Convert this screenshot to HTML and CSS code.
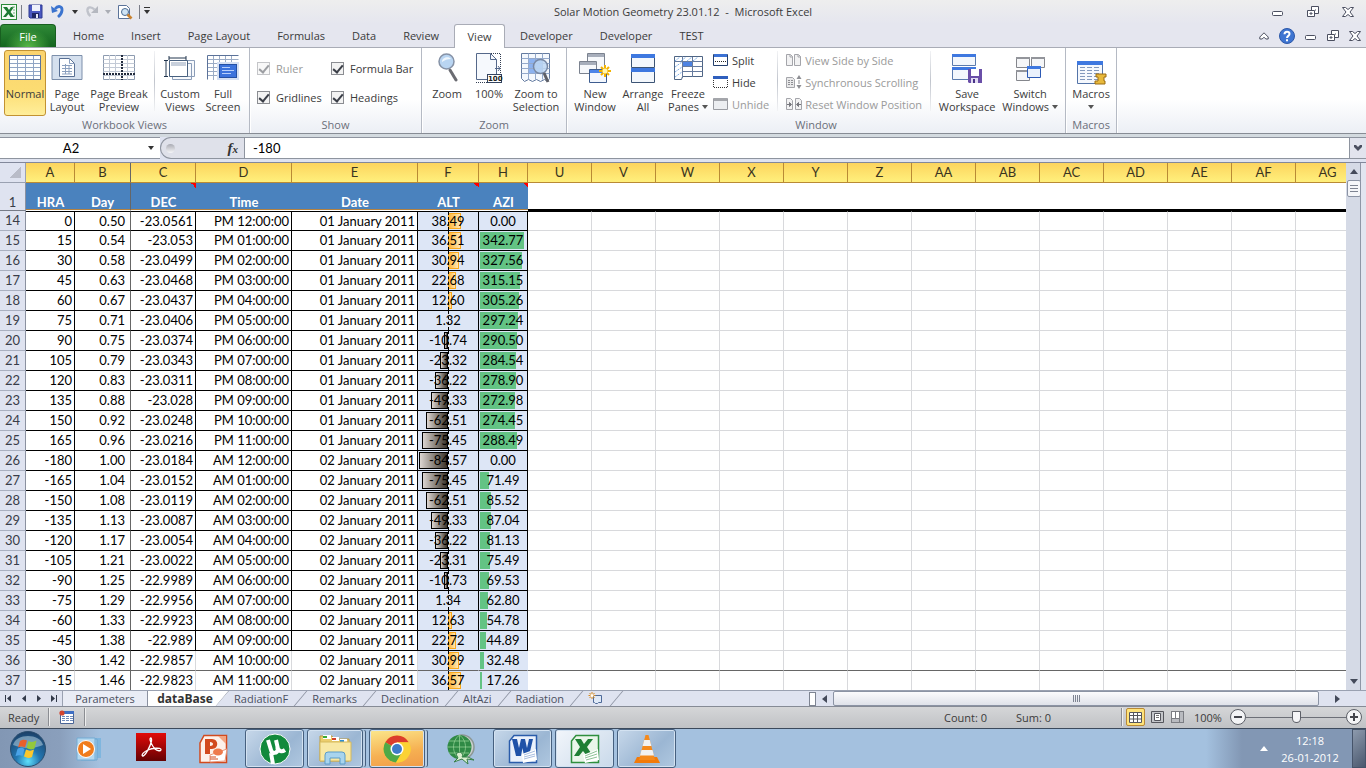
FILE: index.html
```
<!DOCTYPE html>
<html lang="en">
<head>
    <meta charset="UTF-8">
    <meta name="viewport" content="width=device-width, initial-scale=1.0">
    <title>Solar Motion Geometry 23.01.12 - Microsoft Excel</title>
    <link rel="stylesheet" href="styles.css">
</head>
<body>
    <header class="titlebar">
        <div class="quick">
            <svg width="16" height="16" viewBox="0 0 16 16"><rect x=".5" y=".5" width="15" height="15" fill="#f4faf4" stroke="#2b8a3a"/><path d="M2 3h4l2 3 2-3h3L9.500 8l4 5h-4L7.500 10 5 13H2l4-5z" fill="#1d7a33"/><path d="M11 3h3M12 6h2M12 9h2M13 12h1" stroke="#6fb07c"/></svg>
            <span class="quick-sep"></span>
            <button aria-label="Save"><svg width="15" height="15" viewBox="0 0 15 15"><path d="M1 1h13v13H2l-1-1z" fill="#4a58c0" stroke="#2f3b92"/><rect x="4" y="1" width="8" height="6" fill="#eef1fb"/><rect x="4" y="9" width="7" height="5" fill="#1f2766"/><rect x="8" y="10" width="2" height="4" fill="#e6e9f8"/></svg></button>
            <button aria-label="Undo"><svg width="15" height="15" viewBox="0 0 15 15"><path d="M4 5C7 1 11.500 2 11 6.500c-.3 2.500-1.500 4.500-4 6.500" fill="none" stroke="#3b74cf" stroke-width="2.800"/><path d="M0 2l1 7 6-2z" fill="#3b74cf"/></svg></button>
            <i class="caret"></i>
            <button aria-label="Redo"><svg width="15" height="15" viewBox="0 0 15 15"><path d="M10.500 5.500C7 2 3 3 3.500 7c.3 2 1.500 4 3 5" fill="none" stroke="#c0c3cb" stroke-width="2.400"/><path d="M14 2v7H7z" fill="#b5b8c0"/></svg></button>
            <i class="caret pale"></i>
            <button aria-label="Print Preview"><svg width="16" height="16" viewBox="0 0 16 16"><path d="M1.500 1.500h8l3 3v10h-11z" fill="#fff" stroke="#5b7399"/><circle cx="8" cy="8" r="3.500" fill="#cfe4f5" stroke="#4b6b92"/><path d="M10.500 10.500l4 4" stroke="#c9822e" stroke-width="2.600"/></svg></button>
            <span class="quick-sep"></span>
            <i class="caret lined"></i>
        </div>
        <h1 class="title">Solar Motion Geometry 23.01.12&nbsp; -&nbsp; Microsoft Excel</h1>
        <div class="window-buttons">
            <button aria-label="Minimize"><svg width="12" height="12" viewBox="0 0 12 12"><rect x=".5" y="5.500" width="10" height="4" rx="1" fill="#fff" stroke="#4b4f60"/></svg></button>
            <button aria-label="Restore"><svg width="12" height="12" viewBox="0 0 12 12" fill="#fff" stroke="#4b4f60"><path d="M4.500.5h7v7h-7z"/><path d="M.5 4.500h7v6h-7z"/><path d="M3 7h2v1H3zM8 4h1"/></svg></button>
            <button aria-label="Close"><svg width="12" height="12" viewBox="0 0 12 12"><path d="M.5 1.500h3l2.500 2 2.500-2h3L8 6l3.500 4.500h-3L6 8.500l-2.500 2h-3L4 6z" fill="#fff" stroke="#4b4f60"/></svg></button>
        </div>
    </header>

    <nav class="tabs">
        <button class="tab file">File</button>
        <button class="tab">Home</button>
        <button class="tab">Insert</button>
        <button class="tab">Page Layout</button>
        <button class="tab">Formulas</button>
        <button class="tab">Data</button>
        <button class="tab">Review</button>
        <button class="tab current">View</button>
        <button class="tab">Developer</button>
        <button class="tab">Developer</button>
        <button class="tab">TEST</button>
        <div class="tab-tools">
            <button aria-label="Collapse ribbon"><svg width="10" height="8" viewBox="0 0 10 8"><path d="M5 .8L9.200 5v2H6.800L5 5.200 3.200 7H.8V5z" fill="#fff" stroke="#4b4f60"/></svg></button>
            <button aria-label="Help"><svg width="16" height="16" viewBox="0 0 16 16"><circle cx="8" cy="8" r="7.500" fill="#3f75d1" stroke="#2d58a8"/><path d="M5.500 6.200C5.500 2.800 10.500 3 10.500 6c0 1.800-2.500 2-2.500 4M8 11.200v2" fill="none" stroke="#fff" stroke-width="2"/></svg></button>
            <button aria-label="Minimize window"><svg width="12" height="12" viewBox="0 0 12 12"><rect x=".5" y="5.500" width="10" height="4" rx="1" fill="#fff" stroke="#4b4f60"/></svg></button>
            <button aria-label="Restore window"><svg width="12" height="12" viewBox="0 0 12 12" fill="#fff" stroke="#4b4f60"><path d="M4.500.5h7v7h-7z"/><path d="M.5 4.500h7v6h-7z"/><path d="M3 7h2v1H3zM8 4h1"/></svg></button>
            <button aria-label="Close window"><svg width="12" height="12" viewBox="0 0 12 12"><path d="M.5 1.500h3l2.500 2 2.500-2h3L8 6l3.500 4.500h-3L6 8.500l-2.500 2h-3L4 6z" fill="#fff" stroke="#4b4f60"/></svg></button>
        </div>
    </nav>

    <section class="ribbon">
        <div class="group">
            <div class="group-body">
                <button class="big selected w42"><svg width="32" height="29" viewBox="0 -1 32 29"><path d="M.5 1.500h31v24H.5z" fill="#fff"/><path d="M.5 5.500h31M.5 9.500h31M.5 13.500h31M.5 17.500h31M.5 21.500h31M8.500 1v25M16.500 1v25M24.500 1v25" stroke="#90a5c4"/><path d="M.5 1.500h31v24H.5z" fill="none" stroke="#5b7299"/></svg><span>Normal</span></button>
                <button class="big w42"><svg width="32" height="29" viewBox="0 -1 32 29"><path d="M1 1.500h30v24H1z" fill="#d5e0ee" stroke="#7c8fab"/><path d="M8.500 4.500h10l5 5v13h-15z" fill="#fff" stroke="#586f93"/><path d="M18.500 4.500v5h5M11 11.500h10M11 14.500h10M11 17.500h10M11 20h10M14.500 10v10M18 11v9" fill="none" stroke="#8ba0bf"/></svg><span>Page<br>Layout</span></button>
                <button class="big w62"><svg width="32" height="29" viewBox="0 -1 32 29"><path d="M.5 1.500h31v24H.5z" fill="#fff" stroke="#8d9bb0"/><path d="M.5 5.500h31M.5 9.500h31M.5 13.500h31M.5 17.500h31M.5 21.500h31M6.500 1v25M12.500 1v25M24.500 1v25" stroke="#c3cad6"/><path d="M0 20h32M19 1v25" stroke="#222b3d" stroke-width="2" stroke-dasharray="2 1"/></svg><span>Page Break<br>Preview</span></button>
                <span class="sep"></span>
                <button class="big w42"><svg width="32" height="29" viewBox="0 -1 32 29"><path d="M13.500 6.500h17v16h-17zM8.500 9.500h19v16h-19z" fill="#f7f9fc" stroke="#8b9db8"/><path d="M5.500 6.500h18v16h-18z" fill="#fff" stroke="#47607f"/><path d="M7 8h15v4H7z" fill="#c8d0dc"/><path d="M5 4h17M2 7v15M5 2v4M22 2v4M0 6.500h4M0 22.500h4" stroke="#22364f"/></svg><span>Custom<br>Views</span></button>
                <button class="big w44"><svg width="32" height="29" viewBox="0 -1 32 29"><path d="M.5 1.500h31v24H.5z" fill="#fff"/><path d="M.5 5.500h31M.5 9.500h31M.5 13.500h31M.5 17.500h31M.5 21.500h31M6.500 1v25M12.500 1v25M18.500 1v25M24.500 1v25" stroke="#9bacc6"/><path d="M.5 25.500v-24h31" fill="none" stroke="#5b7299"/><rect x="10" y="8" width="22" height="18" fill="#d5e0f3"/><rect x="12.500" y="10.500" width="17" height="13" fill="#3c73dc" stroke="#2450a3"/><path d="M15 13.500h8M15 16.500h12M15 19.500h9" stroke="#b8d0fb"/></svg><span>Full<br>Screen</span></button>
            </div>
            <div class="group-name">Workbook Views</div>
        </div>

        <div class="group">
            <div class="group-body checks">
                <label class="off"><input type="checkbox" checked disabled>Ruler</label>
                <label><input type="checkbox" checked>Formula Bar</label>
                <label><input type="checkbox" checked>Gridlines</label>
                <label><input type="checkbox" checked>Headings</label>
            </div>
            <div class="group-name">Show</div>
        </div>

        <div class="group">
            <div class="group-body">
                <button class="big w42"><svg width="32" height="32" viewBox="0 0 32 32"><path d="M19 17l6 10" stroke="#6b6c72" stroke-width="3" stroke-linecap="round"/><circle cx="15.500" cy="8.500" r="7.500" fill="#b9d5f2" stroke="#8692a6" stroke-width="1.500"/><path d="M11 9c0-5 7-6 9-3-4 0-6 1-9 3z" fill="#eef6fd"/></svg><span>Zoom</span></button>
                <button class="big w42"><svg width="32" height="32" viewBox="0 0 32 32"><path d="M14 .5h13.500v29H3" fill="none" stroke="#333e52" stroke-dasharray="1 1"/><path d="M3.500.5h14l6 6v20h-20z" fill="#f6f9fd" stroke="#55688a"/><path d="M17.500.5v6h6M22 15.500h5M25 13l2 2.500-2 2.500" fill="none" stroke="#55688a"/><rect x="14.500" y="21.500" width="14" height="8" fill="#fff" stroke="#33435f"/><text x="15" y="28" class="tiny">100</text></svg><span>100%</span></button>
                <button class="big w52"><svg width="32" height="32" viewBox="0 0 32 32"><path d="M1.500.5h28v25l-2 3-3-2-4 2-4-2-4 2-4-2-4 2-3-3z" fill="#f4f8fd" stroke="#647ba0"/><path d="M8 5h15v15H8z" fill="#8cb2ef"/><path d="M1.500 5.500h28M1.500 10.500h28M1.500 15.500h28M1.500 20.500h28M8.500.5v26M15.500.5v26M22.500.5v26" stroke="#94a9cb"/><circle cx="20.500" cy="13.500" r="7" fill="#bdd7f3" fill-opacity=".85" stroke="#7888a4" stroke-width="1.500"/><path d="M24 20l4 9" stroke="#5e6068" stroke-width="3"/></svg><span>Zoom to<br>Selection</span></button>
            </div>
            <div class="group-name">Zoom</div>
        </div>

        <div class="group">
            <div class="group-body">
                <button class="big w48"><svg width="32" height="32" viewBox="0 0 32 32"><path d="M8.500.5h17v20h-17z" fill="#f6f8fb" stroke="#7b828f"/><path d="M9 1h16v3H9z" fill="#a7aebb"/><path d="M.5 8.500h17v12H.5z" fill="#f6f8fb" stroke="#7b828f"/><path d="M1 9h16v3H1z" fill="#a7aebb"/><path d="M10.500 16.500h17v13h-17z" fill="#f3f7fd" stroke="#3d5c8f"/><path d="M11 17h16v3H11z" fill="#4d85e8"/><path d="M26 12v12M20 18h12M22 14l8 8M30 14l-8 8" stroke="#f2b200" stroke-width="2"/><circle cx="26" cy="18" r="2.500" fill="#fff6b0"/></svg><span>New<br>Window</span></button>
                <button class="big w48"><svg width="32" height="32" viewBox="0 0 32 32"><path d="M4.500 1.500h23v13h-23zM4.500 15.500h23v14h-23z" fill="#f3f7fc" stroke="#3c5475"/><path d="M4 1h24v4H4zM4 15h24v4H4z" fill="#3e78e0"/></svg><span>Arrange<br>All</span></button>
                <button class="big w42"><svg width="32" height="32" viewBox="0 0 32 32"><path d="M2.500 3.500h28v20h-20l-1 3h-7z" fill="#fff" stroke="#4f6584"/><path d="M2.500 8.500h28M10.500 3v22M10.500 13.500h20M10.500 18.500h20M20.500 4v20" stroke="#667b9e"/><path d="M11 9h9v4h-9z" fill="#4d83e3"/><path d="M3 8l5-4M9 8l5-4M15 8l5-4M21 8l5-4M3 14l7-5M3 19l7-5M3 24l7-5" stroke="#7fb0e8" stroke-dasharray="2 1"/></svg><span>Freeze<br>Panes <i class="caret"></i></span></button>
                <div class="small-list">
                    <button><svg width="16" height="14" viewBox="0 0 16 14"><path d="M.5 1.500h14v11H.5z" fill="#fff" stroke="#25406d"/><path d="M1 1h13v3H1z" fill="#3c72d4"/><path d="M2 8.500h12" stroke="#222" stroke-dasharray="1 1"/></svg>Split</button>
                    <button><svg width="16" height="14" viewBox="0 0 16 14"><path d="M.5 3v9.500h14V3" fill="#fff" stroke="#333" stroke-dasharray="1 1"/><path d="M0 1h15v3H0z" fill="#2f5fbd"/></svg>Hide</button>
                    <button disabled><svg width="16" height="14" viewBox="0 0 16 14"><path d="M.5 1.500h14v11H.5z" fill="#eceef1" stroke="#9a9ca2"/><path d="M1 1h13v3H1z" fill="#a4a6ab"/></svg>Unhide</button>
                </div>
                <span class="sep"></span>
                <div class="small-list">
                    <button disabled><svg width="16" height="14" viewBox="0 0 16 14"><path d="M.5 1.500h4l2 2v9h-6zM8.500 1.500h4l2 2v9h-6z" fill="#f2f2f3" stroke="#a4a5aa"/><path d="M4 2v2h3M12 2v2h3" fill="none" stroke="#a4a5aa"/></svg>View Side by Side</button>
                    <button disabled><svg width="16" height="14" viewBox="0 0 16 14"><path d="M.5 2.500h6l2 2v8h-8z" fill="#e9e9ea" stroke="#a4a5aa"/><path d="M2 5.500h2M5 5.500h2M2 7.500h2M5 7.500h2M2 9.500h2M5 9.500h2" stroke="#8d8e93"/><path d="M13 0l2.500 4h-5zM13 14l2.500-4h-5z" fill="#8d8e93"/><path d="M13 5v4" stroke="#8d8e93"/></svg>Synchronous Scrolling</button>
                    <button disabled><svg width="16" height="14" viewBox="0 0 16 14"><path d="M.5 1.500h4l2 2v9h-6zM9.500 1.500h4l2 2v9h-6z" fill="#f2f2f3" stroke="#a4a5aa"/><path d="M1 7.500h4M11 7.500h4M3.500 5.500l2 2-2 2zM12.500 5.500l-2 2 2 2z" fill="#76777d" stroke="#76777d"/></svg>Reset Window Position</button>
                </div>
                <span class="sep"></span>
                <button class="big w64"><svg width="32" height="32" viewBox="0 0 32 32"><path d="M1.500 1.500h23v11h-23zM1.500 14.500h23v12h-23z" fill="#f3f7fc" stroke="#5b7bad"/><path d="M1 1h24v3H1zM1 14h24v3H1z" fill="#3e78e0"/><path d="M17 16h14v14H18l-1-1z" fill="#6a4fa8"/><path d="M20 16h8v7h-8z" fill="#fff"/><path d="M20 25h7v5h-7z" fill="#e2dcf2"/><path d="M22 26h2v4h-2z" fill="#493387"/></svg><span>Save<br>Workspace</span></button>
                <button class="big w62"><svg width="32" height="32" viewBox="0 0 32 32"><path d="M2.500 4.500h13v10h-13zM17.500 4.500h13v10h-13zM2.500 17.500h13v10h-13z" fill="#f5f6f8" stroke="#84868c"/><path d="M2 4h14v2H2zM17 4h14v2H17zM2 17h14v2H2z" fill="#93959b"/><path d="M13.500 13.500h13v11h-13z" fill="#eaf1fc" stroke="#2c5ab4"/><path d="M13 13h14v3H13z" fill="#3e78e0"/></svg><span>Switch<br>Windows <i class="caret"></i></span></button>
            </div>
            <div class="group-name">Window</div>
        </div>

        <div class="group">
            <div class="group-body">
                <button class="big w42"><svg width="32" height="32" viewBox="0 0 32 32"><path d="M2.500 8.500h25v22h-25z" fill="#f5f8fd" stroke="#5474a8"/><path d="M2 8h26v4H2z" fill="#3e78e0"/><path d="M5 14.500h20M5 17.500h20M5 20.500h20M5 23.500h20M5 26.500h20" stroke="#8298bd" stroke-dasharray="5 2"/><path d="M21 21h10v3h-2v4h1v3H20v-3h3v-4h-2z" fill="#e8b93c" stroke="#9b6d13"/></svg><span>Macros<br><i class="caret"></i></span></button>
            </div>
            <div class="group-name">Macros</div>
        </div>
    </section>

    <section class="formula-bar">
        <div class="name-box"><input type="text" value="A2" aria-label="Name Box"><i class="caret"></i></div>
        <div class="fx-area"><span class="knob"></span><button class="fx" aria-label="Insert Function"><i>f</i><small>x</small></button></div>
        <input class="formula" type="text" value="-180" aria-label="Formula">
        <button class="expand" aria-label="Expand Formula Bar"><svg width="8" height="6" viewBox="0 0 8 6"><path d="M0 0h2l2 2 2-2h2v2L4 6 0 2z" fill="#4b4f60"/></svg></button>
    </section>

    <main class="workspace">
        <div class="sheet">
            <table class="grid" id="grid">
                <colgroup><col class="c-row"><col class="c-a"><col class="c-b"><col class="c-c"><col class="c-d"><col class="c-e"><col class="c-f"><col class="c-h"></colgroup>
                <thead></thead>
                <tbody></tbody>
            </table>
        </div>
        <div class="vscroll">
            <button aria-label="Scroll up"><i class="tri up"></i></button>
            <span class="thumb"></span>
            <button class="last" aria-label="Scroll down"><i class="tri down"></i></button>
        </div>
    </main>

    <section class="sheet-bar">
        <div class="sheet-nav">
            <button aria-label="First sheet"><svg width="8" height="7" viewBox="0 0 8 7"><path d="M0 0h1v7H0zM6 0v7L2 3.500z" fill="#333a4a"/></svg></button>
            <button aria-label="Previous sheet"><svg width="8" height="7" viewBox="0 0 8 7"><path d="M6 0v7L2 3.500z" fill="#333a4a"/></svg></button>
            <button aria-label="Next sheet"><svg width="8" height="7" viewBox="0 0 8 7"><path d="M2 0v7l4-3.500z" fill="#333a4a"/></svg></button>
            <button aria-label="Last sheet"><svg width="8" height="7" viewBox="0 0 8 7"><path d="M6 0h1v7H6zM1 0v7l4-3.500z" fill="#333a4a"/></svg></button>
        </div>
        <div class="sheet-tabs">
            <button class="first">Parameters</button>
            <button class="active">dataBase</button>
            <button>RadiationF</button>
            <button>Remarks</button>
            <button>Declination</button>
            <button>AltAzi</button>
            <button>Radiation</button>
            <button class="new" aria-label="Insert Worksheet"><svg width="16" height="13" viewBox="0 0 16 13"><path d="M5.500 3.500h8v7h-3l-1 1h-2l-1-1h-1z" fill="#dfe9f7" stroke="#4e6a99"/><path d="M4 0v7M.5 3.500h7M1.500 1l5 5M6.500 1l-5 5" stroke="#d98a1c"/><circle cx="4" cy="3.500" r="1.500" fill="#fff"/></svg></button>
        </div>
        <div class="hscroll">
            <span class="splitter"></span>
            <button aria-label="Scroll left"><i class="tri left"></i></button>
            <div class="track"><span class="thumb"></span></div>
            <button aria-label="Scroll right"><i class="tri right"></i></button>
        </div>
    </section>

    <footer class="status">
        <span class="ready">Ready</span>
        <span class="status-sep"></span>
        <svg class="record" width="16" height="14" viewBox="0 0 16 14"><path d="M1.500 1.500h13v12h-13z" fill="#fff" stroke="#4a6596"/><path d="M2 1h13v3H2z" fill="#3e6fc4"/><path d="M3 6.500h11M3 8.500h11M3 10.500h11" stroke="#6d8abb" stroke-dasharray="3 1"/><circle cx="3" cy="3" r="2.600" fill="#d2452f"/></svg>
        <span class="status-sep"></span>
        <span class="count">Count: 0</span>
        <span class="sum">Sum: 0</span>
        <span class="status-sep"></span>
        <div class="views">
            <button class="on" aria-label="Normal view"><svg width="13" height="11" viewBox="0 0 13 11"><path d="M.5.5h12v10H.5zM.5 3.500h12M.5 7h12M4.500.5v10M8.500.5v10" fill="#fff" stroke="#55565c"/></svg></button>
            <button aria-label="Page layout view"><svg width="13" height="12" viewBox="0 0 13 12"><path d="M.5.5h12v11H.5z" fill="#c4c6ca" stroke="#55565c"/><path d="M3.500 2.500h6v7h-6z" fill="#fff" stroke="#55565c"/><path d="M5 4.500h3M5 6.500h3" stroke="#777"/></svg></button>
            <button aria-label="Page break view"><svg width="13" height="12" viewBox="0 0 13 12"><path d="M0 0h13v12H0z" fill="#7b7d83"/><path d="M1 1h3v6H1zM5 1h3v6H5zM9 1h3v10H9z" fill="#fff"/><path d="M1 8h7v3H1zM9 1h3v10H9z" fill="#b9bbc0"/></svg></button>
        </div>
        <span class="percent">100%</span>
        <button aria-label="Zoom out"><svg width="16" height="16" viewBox="0 0 16 16"><circle cx="8" cy="8" r="7.500" fill="#f3f4f6" stroke="#5c5f67"/><path d="M4 8h8" stroke="#44464d" stroke-width="2"/></svg></button>
        <input class="zoom-slider" type="range" min="0" max="100" value="50" aria-label="Zoom">
        <button aria-label="Zoom in"><svg width="16" height="16" viewBox="0 0 16 16"><circle cx="8" cy="8" r="7.500" fill="#f3f4f6" stroke="#5c5f67"/><path d="M4 8h8M8 4v8" stroke="#44464d" stroke-width="2"/></svg></button>
    </footer>

    <footer class="taskbar">
        <button class="slot start" aria-label="Start"><svg width="38" height="38" viewBox="0 0 38 38"><defs><radialGradient id="orb" cx=".5" cy=".85" r=".85"><stop offset="0" stop-color="#5fe0fb"/><stop offset=".4" stop-color="#2277b2"/><stop offset="1" stop-color="#1c3f66"/></radialGradient></defs><circle cx="19" cy="19" r="17.500" fill="url(#orb)" stroke="#294d6e"/><path d="M4 15C7 3 31 3 34 15c-9 4-20 4-30 0z" fill="#b6cfdf" opacity=".55"/><path d="M11 11c3-2 5-1.500 7-.5l-2 7c-2-1.500-5-1.500-7 0z" fill="#e8602c"/><path d="M19.500 11c3 1.500 5 1 8-.5l-2 8c-3 1.500-5 1-8-.5z" fill="#94c83c"/><path d="M8.500 19c3-2 5-1 7 0l-2 7c-2-1-4-1-7 0z" fill="#4aa3e8"/><path d="M17 19.500c3 1.500 5 1.500 8 0l-2 7.500c-3 1.500-5 1-8-.5z" fill="#fbc72c"/></svg></button>
        <button class="slot" aria-label="Windows Media Player"><svg width="28" height="26" viewBox="0 0 28 26"><path d="M10 2h16v20H10z" fill="#7fb6de"/><path d="M6 3h16v21H6z" fill="#9dcaea" stroke="#6fa6cf"/><path d="M2 2h18v22H2z" fill="#b5d8ef" stroke="#72abd4"/><circle cx="11" cy="13" r="8.500" fill="#f07c1c" stroke="#fff"/><path d="M8 8l8 5-8 5z" fill="#fff"/></svg></button>
        <button class="slot adobe" aria-label="Adobe Reader"><svg width="30" height="28" viewBox="0 0 30 28"><defs><linearGradient id="pdf" x2="0" y2="1"><stop offset="0" stop-color="#e20a08"/><stop offset="1" stop-color="#640203"/></linearGradient></defs><path d="M0 0h30v28H0z" fill="url(#pdf)"/><path d="M14.500 5c-1.500 1 1 7 4.500 11 2 2 6 2.500 6 .5s-9-1.500-13 .5c-4 1.500-7 5-5.500 6 2.500.5 8-10 9-15 .3-2-.3-3.300-1-3z" fill="none" stroke="#fff" stroke-width="1.300"/></svg></button>
        <button class="slot" aria-label="PowerPoint"><svg width="30" height="30" viewBox="0 0 30 30"><path d="M6 1.500h22.500v27H2V9z" fill="#fdf1ea" stroke="#d24a1e" stroke-width="1.500"/><path d="M20 2h8v8z" fill="#f2a582"/><path d="M7 5h7c7 0 7 10 0 10h-2v5H7zM12 8v4c4 0 4-4 0-4z" fill="#d24a1e" fill-rule="evenodd"/><path d="M12 21l17-6-2 12-15 1z" fill="#fff" stroke="#e9967a"/><ellipse cx="20" cy="18" rx="5" ry="3.500" fill="#ee7a4c"/><path d="M12 23h6M12 25h8" stroke="#d24a1e"/></svg></button>
        <button class="slot tile" aria-label="uTorrent"><svg width="32" height="32" viewBox="0 0 32 32"><circle cx="16" cy="16" r="15" fill="#128a3c" stroke="#fff"/><path d="M9 7l3 10c1 4 6 4 7-1l-2-9M18 14c2 5 5 5 8 3M12 20l2 11" fill="none" stroke="#fff" stroke-width="4"/></svg></button>
        <button class="slot tile stack" aria-label="Explorer"><svg width="34" height="32" viewBox="0 0 34 32"><path d="M2 3h12l2 3h15v22H2z" fill="#eccd6c" stroke="#b99a46"/><path d="M5 2h8v4H5zM14 4h7v4h-7zM22 6h7v4h-7z" fill="#fff"/><path d="M5 3h4v2H5z" fill="#39a936"/><path d="M14 5h4v2h-4z" fill="#d2402c"/><path d="M22 7h4v2h-4z" fill="#2b8ed6"/><path d="M2 9h31v19H2z" fill="#f8e8a4" stroke="#d5b95c"/><path d="M7 31V22q0-3 3-3h14q3 0 3 3v9h-5v-6H12v6z" fill="#a8d4ee" stroke="#5a9cc9"/></svg></button>
        <button class="slot tile stack hot" aria-label="Chrome"><svg width="28" height="28" viewBox="0 0 28 28"><circle cx="14" cy="14" r="13.500" fill="#fbd234"/><path d="M14 14L2.300 7.250A13.500 13.500 0 0 1 25.700 7.250H14z" fill="#dc3d2c"/><path d="M14 14L2.300 7.250A13.500 13.500 0 0 0 13 27.400L19 17z" fill="#4fa947"/><path d="M14 7.500h11.900a13.500 13.500 0 0 1-12.900 20L20 17z" fill="#fbd234"/><circle cx="14" cy="14" r="6.500" fill="#fff"/><circle cx="14" cy="14" r="5" fill="#3e7cc9"/></svg></button>
        <button class="slot" aria-label="Globe"><svg width="30" height="32" viewBox="0 0 30 32"><circle cx="16" cy="14" r="12" fill="#c9cfcd" stroke="#8b9694" stroke-width="1.500"/><circle cx="13.500" cy="14" r="12" fill="#2f8a45"/><path d="M13.500 2v24M1.500 14h24M3 8h20M3 20h20M13.500 2c-8 6-8 18 0 24M13.500 2c8 6 8 18 0 24" fill="none" stroke="#8fce92" stroke-width=".8"/><path d="M10 21c4-4 8 0 6 3h6l6 3-7-1 1 5-6-5-8 3 4-4z" fill="#d9efcf" stroke="#37804a"/></svg></button>
        <button class="slot tile" aria-label="Word"><svg width="30" height="30" viewBox="0 0 30 30"><path d="M6 1.500h22.500v27H1.500V7z" fill="#eaf1fb" stroke="#2a5caa" stroke-width="1.500"/><path d="M4 5h5l2 9 2-9h4l2 9 2-9h4l-4 17h-5l-1.500-8L13 22H8z" fill="#1f52a8"/><path d="M14 20l14-5 1 11-14 3z" fill="#fff"/><path d="M16 21l11-4M16 23l11-3M16 25l11-3" stroke="#a7bde0"/></svg></button>
        <button class="slot tile lit" aria-label="Excel"><svg width="30" height="30" viewBox="0 0 30 30"><path d="M6 1.500h22.500v27H1.500V7z" fill="#eaf6ea" stroke="#2f8f3e" stroke-width="1.500"/><path d="M5 5h6l3 5 4-5h5l-6 8 6 9h-6l-4-5-4 5H4l6-9z" fill="#1e7f34"/><path d="M13 21l15-6 1 11-14 3z" fill="#fff"/><path d="M15 22l12-5M15 24l12-4M16 26l11-3" stroke="#8cc296"/></svg></button>
        <button class="slot tile" aria-label="VLC"><svg width="28" height="30" viewBox="0 0 28 30"><path d="M4 23h20l3 6H1z" fill="#f27a0a"/><path d="M12.500 1h3L22 26H6z" fill="#f58a1c"/><path d="M11.200 6h5.600l1.600 6H9.600zM8.500 16h11l1.500 5.500H7z" fill="#f2f2f2"/></svg></button>
        <div class="tray">
            <i class="tri tray-up"></i>
            <div class="clock">12:18<br>26-01-2012</div>
            <button class="show-desktop" aria-label="Show desktop"></button>
        </div>
    </footer>

    <script src="script.js"></script>
</body>
</html>
```

FILE: styles.css
```
* { box-sizing: border-box; }
body { margin: 0; height: 100vh; display: flex; flex-direction: column; overflow: hidden; font-family: "Open Sans", sans-serif; font-size: 11px; color: #3b3b3b; background: #dfe3f0; }
button { font: inherit; color: inherit; background: none; border: none; padding: 0; margin: 0; cursor: pointer; }
svg { display: block; flex: none; }

.caret { display: inline-block; flex: none; border: 3px solid transparent; border-top: 4px solid #333; border-bottom: 0; }
.caret.pale { border-top-color: #aaadb5; }
.caret.lined { position: relative; }
.caret.lined::before { content: ""; position: absolute; left: -3px; top: -7px; width: 6px; height: 1px; background: #333; }
.tri { display: block; border: 4px solid transparent; }
.tri.up { border-top: 0; border-bottom: 5px solid #444a5a; }
.tri.down { border-bottom: 0; border-top: 5px solid #444a5a; }
.tri.left { border-left: 0; border-right: 5px solid #444a5a; }
.tri.right { border-right: 0; border-left: 5px solid #444a5a; }

/* title */
.titlebar { flex: none; height: 24px; padding-bottom: 1px; display: grid; grid-template-columns: 1fr auto 1fr; align-items: center; background: linear-gradient(#eeeeee, #e5e6ef); }
.quick { display: flex; align-items: center; gap: 4px; padding-left: 1px; }
.quick button { margin: 0 2px; }
.quick-sep { width: 1px; height: 14px; background: #7b7e88; }
.title { margin: 0; font-size: 11px; font-weight: 400; }
.window-buttons { display: flex; justify-content: flex-end; gap: 23px; padding-right: 12px; }

/* ribbon tabs */
.tabs { flex: none; display: flex; height: 24px; background: #e5e6ef; border-bottom: 1px solid #a9acb6; }
.tab { padding: 0 14px 0 13px; height: 23px; font-size: 11px; }
.tab.file { width: 56px; margin-right: 4px; padding: 0; color: #fff; background: radial-gradient(ellipse at bottom, #57b847, transparent 60%), linear-gradient(#2f8a37, #14651f); border: 1px solid #185f20; border-bottom: 0; border-radius: 4px 4px 0 0; }
.tab.current { height: 24px; width: 51px; margin: 0 2px 0 1px; padding: 0; background: #fff; border: 1px solid #a9acb6; border-bottom: 0; border-radius: 3px 3px 0 0; }
.tab-tools { display: flex; align-items: center; gap: 10px; margin-left: auto; padding-right: 5px; }

/* ribbon */
.ribbon { flex: none; display: flex; height: 86px; background: linear-gradient(#fff 60%, #eceff5); border-bottom: 1px solid #878c94; }
.group { display: flex; flex-direction: column; padding: 1px 4px 0; border-right: 1px solid #b5bac4; box-shadow: 1px 0 #fff; }
.group-body { display: flex; flex: 1; }
.group-name { height: 16px; line-height: 15px; text-align: center; color: #6b6f7a; }
.big { display: flex; flex-direction: column; align-items: center; height: 66px; margin-top: 1px; padding: 2px 0; line-height: 13px; white-space: nowrap; text-align: center; border: 1px solid transparent; border-radius: 3px; }
.big span { height: 26px; margin-top: auto; }
.big.selected { background: linear-gradient(#fbd36e, #fcdc72 60%, #ffee9a); border-color: #c29233; }
.big .caret { vertical-align: 2px; border-top-color: #555; }
.w42 { width: 42px; }
.w44 { width: 44px; }
.w48 { width: 48px; }
.w52 { width: 52px; }
.w62 { width: 62px; }
.w64 { width: 64px; }
.sep { width: 1px; height: 60px; margin: 2px 4px; background: linear-gradient(#f2f3f5, #c1c5cd, #f2f3f5); }
.tiny { font: bold 7px "DejaVu Sans", sans-serif; fill: #222; }
.checks { display: grid; grid-template-columns: 74px 86px; grid-template-rows: 29px 29px; padding: 5px 0 0 3px; }
.checks label { display: flex; align-items: center; gap: 6px; white-space: nowrap; }
.checks input { appearance: none; width: 13px; height: 13px; margin: 0; border: 1px solid #8b8d92; background: #f3f3f3; display: grid; place-items: center; }
.checks input::before { content: ""; width: 4px; height: 8px; margin-top: -2px; border: solid #3b3f48; border-width: 0 2px 2px 0; transform: rotate(40deg); }
.checks .off { color: #9a9a9a; }
.checks .off input { opacity: .5; }
.small-list { display: flex; flex-direction: column; padding: 0 4px; }
.small-list button { display: flex; align-items: center; gap: 3px; height: 22px; white-space: nowrap; }
.small-list button:disabled { color: #9a9a9a; }

/* formula bar */
.formula-bar { flex: none; display: flex; height: 29px; padding: 3px 0 0; border-bottom: 1px solid #82889b; box-shadow: inset 0 3px #d3dadf; }
.formula-bar > * { height: 22px; border: solid #8e949f; border-width: 1px 0; }
.name-box { display: flex; align-items: center; width: 160px; padding-right: 6px; background: #fff; }
.name-box input { width: 100%; min-width: 0; padding: 0 6px 0 0; border: 0; background: none; text-align: center; font: 13px Lato, sans-serif; color: #000; }
.fx-area { display: flex; align-items: center; justify-content: space-between; width: 84px; padding: 0 6px 0 5px; background: #dfe1ea; }
.formula-bar .fx-area { border-left-width: 1px; border-radius: 11px 0 0 11px; }
.knob { width: 9px; height: 9px; border-radius: 50%; background: linear-gradient(#a9abb3, #f6f6f9); }
.fx { font: bold italic 15px/18px "Liberation Serif", serif; color: #333; }
.fx small { font-size: 11px; }
.formula { flex: 1; min-width: 0; padding: 0 8px; background: #fff; font: 13px Lato, sans-serif; color: #000; }
.formula-bar .formula { border-left-width: 1px; }
.expand { display: grid; place-items: center; width: 17px; background: #e2e4ee; }
.formula-bar .expand { border-left-width: 1px; }

/* sheet */
.workspace { flex: 1; min-height: 0; display: flex; }
.sheet { flex: 1; min-width: 0; overflow: hidden; background: #fff; }
.grid { table-layout: fixed; width: 1360px; border-collapse: separate; border-spacing: 0; font: 13px/16px Lato, sans-serif; color: #000; }
.c-row { width: 26px; }
.c-a { width: 49px; }
.c-b { width: 56px; }
.c-c { width: 65px; }
.c-d { width: 96px; }
.c-e { width: 126px; }
.c-f { width: 61px; }
.c-h { width: 49px; }
.c-x { width: 64px; }
.grid th, .grid td { height: 20px; padding: 0 2px 1px; white-space: nowrap; overflow: hidden; border: solid #d8d9dc; border-width: 0 1px 1px 0; text-align: right; font-weight: 400; }
.grid thead th { background: linear-gradient(#fcd45e, #fff07c); border-color: #b98a35; text-align: center; color: #3a3420; }
.grid thead th:first-child { background: linear-gradient(135deg, transparent 50%, #b9bcc8 50%) 10px 4px / 11px 11px no-repeat, #dfe3f0; border-color: #9aa1b1; }
.grid .row-no { background: #dfe3f0; border-color: #a9b0c0; border-right-color: #8b91a0; text-align: center; color: #3a3d48; }
.grid .titles th { height: 28px; vertical-align: bottom; border-color: #000; border-bottom-width: 2px; border-right: 0; padding-bottom: 0; }
.grid .titles .row-no { border-right: 1px solid #8b91a0; border-bottom: 1px solid #777c88; }
.grid .titles .name { position: relative; text-align: center; font-weight: 700; color: #fff; background: #4a82be; border-bottom: 1px solid #fff; box-shadow: inset 0 -1px #b4813f; }
.grid .titles .noted::after { content: ""; position: absolute; right: 0; top: 0; border: solid transparent; border-width: 0 0 5px 5px; border-right: 0 solid red; background: linear-gradient(45deg, transparent 50%, red 50%) border-box; }
.grid .first td { border-top: 1px solid #000; }
.grid .boxed .cell { border-color: #000; }
.grid .frozen td { border-bottom-color: #666; }
.grid .day, .grid .boxed .day, .grid .titles .day, .grid thead th:nth-child(3) { padding-right: 5px; border-right: 1px solid #666; }
.grid thead th:nth-child(3), .grid .titles .day { padding-right: 2px; }
.grid .alt, .grid .azi { position: relative; text-align: center; background: #dde6f6; }
.grid tr:not(.boxed) .alt, .grid tr:not(.boxed) .azi { border-right-color: #dde6f6; }
.alt span, .azi span { position: relative; }
.alt::after { content: ""; position: absolute; left: 50%; top: 0; bottom: 0; border-left: 1px dashed #000; }
.bar { position: absolute; top: 1px; bottom: 1px; }
.bar.plus { left: 50%; background: linear-gradient(90deg, #ffb83c, #ffe6b4); border: 1px solid #fba91c; }
.bar.minus { right: 50%; background: linear-gradient(90deg, #dcd6d2, #3a3228); border: 1px solid #000; }
.bar.green { left: 1px; background: #63c384; }

.vscroll { display: flex; flex-direction: column; align-items: center; width: 20px; padding-right: 5px; background: linear-gradient(90deg, #d5dae6 14px, #8f96a6 14px, #8f96a6 15px, #e2e5f0 15px); }
.vscroll button { display: grid; place-items: center; height: 17px; }
.vscroll .thumb { width: 14px; height: 17px; border: 1px solid #8b93a4; border-radius: 2px; background: repeating-linear-gradient(#7e8492 0 1px, transparent 1px 3px) center / 8px 7px no-repeat, #f5f6f9; }
.vscroll .last { margin-top: auto; }

/* sheet tabs */
.sheet-bar { flex: none; display: flex; height: 17px; border-top: 1px solid #9aa1b1; border-bottom: 1px solid #868b96; }
.sheet-nav { display: flex; align-items: center; gap: 7px; width: 63px; padding-left: 5px; border-right: 1px solid #9aa1b1; }
.sheet-tabs { display: flex; flex: 1; min-width: 0; color: #4b5060; }
.sheet-tabs button { position: relative; padding: 0 12px; line-height: 15px; white-space: nowrap; }
.sheet-tabs button:nth-child(n+2)::after { content: ""; position: absolute; right: -1px; top: 0; width: 1px; height: 15px; background: #8b91a0; transform: skewX(-40deg); }
.sheet-tabs .first { width: 85px; background: #e9ecf5; border-right: 1px solid #8b91a0; }
.sheet-tabs .active { width: 81px; margin-right: -7px; padding: 0 7px 0 0; background: #fff; font-size: 12px; font-weight: 700; color: #333; clip-path: polygon(0 0, 100% 0, calc(100% - 13px) 100%, 0 100%); }
.sheet-tabs button.active::after { right: 6px; }
.hscroll { display: flex; flex: 0 1 557px; align-items: center; }
.splitter { width: 7px; height: 14px; border: 1px solid #7e8492; background: #fff; }
.hscroll button { display: grid; place-items: center; width: 17px; }
.track { flex: 1; height: 15px; display: flex; }
.track .thumb { width: 98%; border: 1px solid #8b93a4; border-radius: 2px; background: repeating-linear-gradient(90deg, #7e8492 0 1px, transparent 1px 2px) center / 7px 7px no-repeat, linear-gradient(#fbfbfd, #dfe2ea); }
.hscroll button:last-child { margin-right: 20px; }

/* status */
.status { flex: none; display: flex; align-items: center; height: 21px; padding: 0 4px 1px 8px; background: linear-gradient(#d5d6d8, #c0c2c5); }
.status-sep { width: 2px; height: 18px; background: #8b8d92; border-right: 1px solid #eee; }
.ready { width: 40px; }
.record { margin: 0 9px; }
.count { margin-left: auto; width: 72px; }
.sum { width: 105px; }
.views { display: flex; align-items: center; gap: 5px; margin: 0 9px 0 3px; }
.views button { height: 18px; padding: 0 1px; }
.views .on { padding: 0 2px; border: 1px solid #b98a35; border-radius: 2px; background: #ffe37a; }
.percent { width: 36px; }
.zoom-slider { appearance: none; width: 100px; height: 16px; margin: 0; background: linear-gradient(#6c6f77, #6c6f77) center / 100% 1px no-repeat; }
.zoom-slider::-webkit-slider-thumb { appearance: none; width: 9px; height: 12px; border: 1px solid #5c5f67; border-radius: 1px 1px 5px 5px; background: #f6f6f8; }

/* taskbar */
.taskbar { flex: none; display: flex; height: 40px; border-top: 1px solid #3c4a5c; background: linear-gradient(90deg, #8297b4, #8a9fbc 60px, #a4c1df 100px); }
.slot { display: grid; place-items: center; width: 59px; margin-right: 3px; }
.slot.start { width: 56px; }
.slot.adobe { padding-bottom: 4px; }
.tile { border: 1px solid #46607f; border-radius: 3px; box-shadow: inset 0 0 0 1px #d3e2f1; background: linear-gradient(135deg, #c7d8ea, #9bb6d3 60%, #b0c8e0); }
.tile.stack { width: 56px; margin-right: 6px; box-shadow: inset 0 0 0 1px #d3e2f1, 3px 0 0 -1px #b8cde3, 4px 0 0 -1px #46607f; }
.tile.hot { background: linear-gradient(170deg, #fbe88c, #f6b052 60%, #f09a48); }
.tile.lit { background: linear-gradient(135deg, #f2f6fb, #c9d9ea); }
.tray { display: flex; align-items: center; justify-content: flex-end; width: 160px; margin-left: auto; background: linear-gradient(90deg, transparent, #8297b4 36px); color: #fff; }
.tray-up { border-top: 0; border-bottom: 5px solid #fff; }
.clock { width: 84px; text-align: center; line-height: 17px; }
.show-desktop { align-self: stretch; width: 14px; border: 1px solid #46546a; background: linear-gradient(135deg, #8d9aad, #4a586e); }
```

FILE: script.js
```
const extraColumns = ["U", "V", "W", "X", "Y", "Z", "AA", "AB", "AC", "AD", "AE", "AF", "AG"];
const firstRow = 14;

// declination, altitude, azimuth for each hour
const hours = [
    ["-23.0561", 38.49, 0], ["-23.053", 36.51, 342.77], ["-23.0499", 30.94, 327.56],
    ["-23.0468", 22.68, 315.15], ["-23.0437", 12.60, 305.26], ["-23.0406", 1.32, 297.24],
    ["-23.0374", -10.74, 290.50], ["-23.0343", -23.32, 284.54], ["-23.0311", -36.22, 278.90],
    ["-23.028", -49.33, 272.98], ["-23.0248", -62.51, 274.45], ["-23.0216", -75.45, 288.49],
    ["-23.0184", -84.57, 0], ["-23.0152", -75.45, 71.49], ["-23.0119", -62.51, 85.52],
    ["-23.0087", -49.33, 87.04], ["-23.0054", -36.22, 81.13], ["-23.0022", -23.31, 75.49],
    ["-22.9989", -10.73, 69.53], ["-22.9956", 1.34, 62.80], ["-22.9923", 12.63, 54.78],
    ["-22.989", 22.72, 44.89], ["-22.9857", 30.99, 32.48], ["-22.9823", 36.57, 17.26]
];

function altBar(value) {
    if (Math.abs(value) < 5) return "";
    return `<div class="bar ${value > 0 ? "plus" : "minus"}" style="width:${Math.abs(value) * 0.58}%"></div>`;
}

function aziBar(value) {
    return value ? `<div class="bar green" style="width:${value * 0.267}%"></div>` : "";
}

const grid = document.getElementById("grid");
grid.querySelector("colgroup").innerHTML += extraColumns.map(() => `<col class="c-x">`).join("");
grid.tHead.innerHTML = "<tr><th></th>" + ["A", "B", "C", "D", "E", "F", "H", ...extraColumns].map(c => `<th>${c}</th>`).join("") + "</tr>";

const blanks = extraColumns.map(() => "<td></td>").join("");
let rows = `<tr class="titles"><th class="row-no">1</th>
    <th class="name">HRA</th><th class="name day">Day</th><th class="name noted">DEC</th><th class="name">Time</th>
    <th class="name">Date</th><th class="name noted">ALT</th><th class="name noted">AZI</th>${extraColumns.map(() => "<th></th>").join("")}</tr>`;

hours.forEach(([dec, alt, azi], i) => {
    const row = firstRow + i;
    const hour = (row - 2) % 24;
    const time = `${hour < 12 ? "AM" : "PM"} ${String(hour % 12 || 12).padStart(2, "0")}:00:00`;
    const date = `${row < 26 ? "01" : "02"} January 2011`;
    const kind = (i === 0 ? "first " : "") + (row < 36 ? "boxed" : row === 36 ? "frozen" : "");
    rows += `<tr class="${kind}"><th class="row-no">${row}</th>
        <td class="cell">${hour * 15 - 180}</td><td class="cell day">${((row - 2) / 24).toFixed(2)}</td>
        <td class="cell">${dec}</td><td class="cell">${time}</td><td class="cell">${date}</td>
        <td class="cell alt">${altBar(alt)}<span>${alt.toFixed(2)}</span></td>
        <td class="cell azi">${aziBar(azi)}<span>${azi.toFixed(2)}</span></td>${blanks}</tr>`;
});
grid.tBodies[0].innerHTML = rows;
```
